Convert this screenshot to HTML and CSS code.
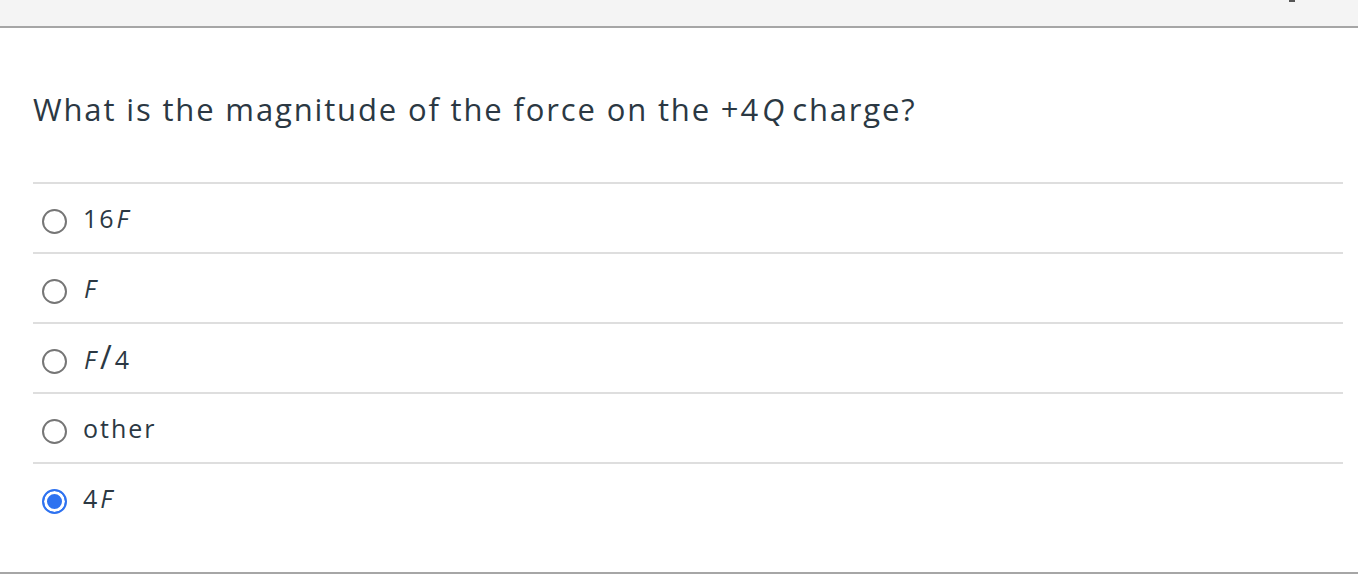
FILE: index.html
```html
<!DOCTYPE html>
<html>
<head>
<meta charset="utf-8">
<link rel="stylesheet" href="styles.css">
</head>
<body>
<div class="topbar"><span class="mark"></span></div>
<main class="content">
  <h1 class="question">What is the magnitude of the force on the +4<i class="m">Q</i>charge?</h1>
  <ul class="options">
    <li class="option"><span class="radio"></span><span class="label">16<i class="m">F</i></span></li>
    <li class="option"><span class="radio"></span><span class="label"><i class="m">F</i></span></li>
    <li class="option"><span class="radio"></span><span class="label"><i class="m">F</i><span class="slash">/</span>4</span></li>
    <li class="option"><span class="radio"></span><span class="label">other</span></li>
    <li class="option"><span class="radio checked"></span><span class="label">4<i class="m">F</i></span></li>
  </ul>
</main>
<div class="bottom"></div>
</body>
</html>
```

FILE: styles.css
```css
html, body {
  margin: 0;
  padding: 0;
  background: #ffffff;
}
body {
  font-family: "Open Sans", "Liberation Sans", sans-serif;
  color: #2b3843;
  width: 1358px;
  height: 578px;
  overflow: hidden;
  position: relative;
}
.topbar {
  height: 26px;
  background: #f4f4f4;
  border-bottom: 2px solid #a6a6a6;
  position: relative;
}
.mark {
  position: absolute;
  left: 1289px;
  top: 0;
  width: 6px;
  height: 2px;
  background: #555;
}
.content {
  padding: 0 15px 0 33px;
  height: 544px;
  box-sizing: border-box;
}
.question {
  margin: 0;
  padding-top: 61px;
  height: 154px;
  box-sizing: border-box;
  font-size: 31px;
  font-weight: 400;
  line-height: 40px;
  letter-spacing: 1.85px;
  white-space: nowrap;
}
.m {
  font-style: italic;
  margin: 0 6px 0 2px;
}
.options {
  list-style: none;
  margin: 0;
  padding: 0;
}
.option {
  height: 70px;
  border-top: 2px solid #dedede;
  box-sizing: border-box;
  display: flex;
  align-items: center;
  padding-left: 9px;
  padding-top: 2px;
}
.radio {
  width: 25px;
  height: 25px;
  box-sizing: border-box;
  border: 2px solid #767676;
  border-radius: 50%;
  margin-right: 16px;
  margin-top: 5px;
  flex: none;
}
.radio.checked {
  border: 2px solid #2e72f0;
  background: #2e72f0;
  box-shadow: inset 0 0 0 3px #ffffff;
}
.label {
  font-size: 25px;
  line-height: 30px;
  letter-spacing: 2px;
  margin-top: -3px;
}
.label .m {
  margin: 0 1px;
}
.slash {
  font-size: 32px;
  margin: 0 1px;
}
.bottom {
  position: absolute;
  left: 0;
  top: 572px;
  width: 1358px;
  height: 2px;
  background: #a6a6a6;
}
```
